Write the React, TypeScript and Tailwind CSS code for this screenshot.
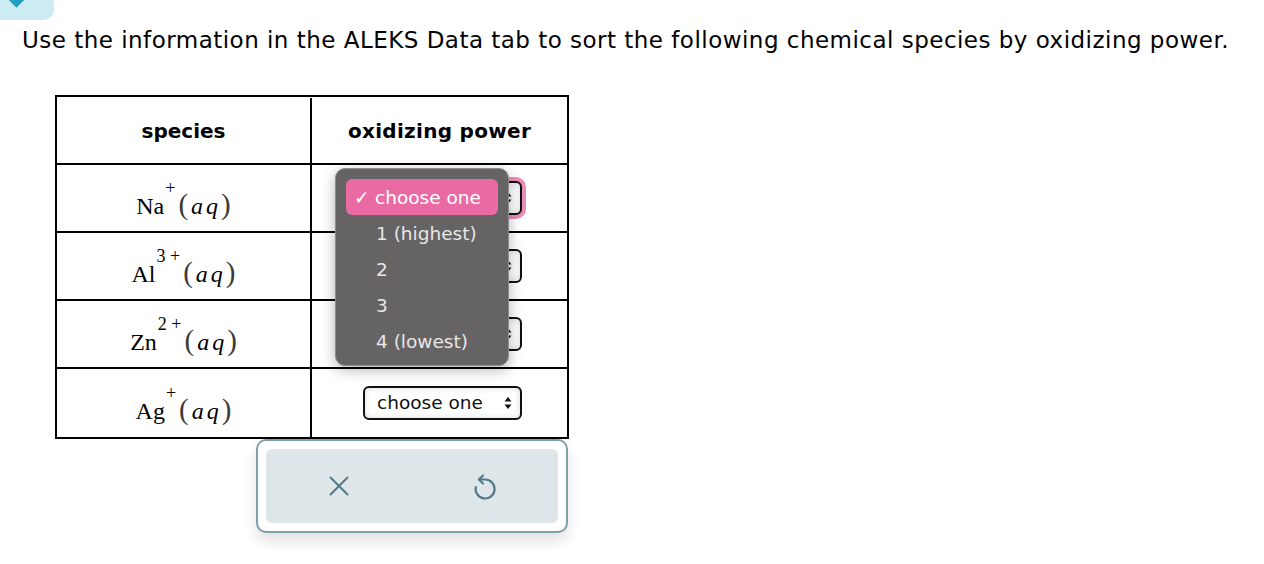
import React from "react";

const species = [
  { base: "Na", charge: "+" },
  { base: "Al", charge: "3 +" },
  { base: "Zn", charge: "2 +" },
  { base: "Ag", charge: "+" },
];

function Species({ base, charge }: { base: string; charge: string }) {
  return (
    <div className="flex items-end font-['Liberation_Serif',serif] text-black">
      <span className="text-[24px] leading-[26px]">{base}</span>
      <span className="text-[18px] leading-[18px] mb-[22px] ml-[1px] whitespace-pre">{charge}</span>
      <span className="flex items-end ml-[3px] text-[#3a3a3a]">
        <span className="text-[29px] leading-[30px] font-light">(</span>
        <span className="italic text-[24px] leading-[26px] mx-[3px] text-black">a</span>
        <span className="italic text-[24px] leading-[26px] mr-[3px] text-black">q</span>
        <span className="text-[29px] leading-[30px] font-light">)</span>
      </span>
    </div>
  );
}

function Arrows() {
  return (
    <svg width="8" height="14" viewBox="0 0 8 14" className="shrink-0">
      <path d="M4 1 L7.5 5.5 H0.5 Z" fill="#111" />
      <path d="M4 13 L7.5 8.5 H0.5 Z" fill="#111" />
    </svg>
  );
}

function Select({ focused }: { focused?: boolean }) {
  return (
    <div
      className={
        "flex items-center justify-between w-[159px] h-[34px] rounded-[6px] border-2 border-[#111] bg-white pl-[12px] pr-[8px] text-[18.5px] text-[#111] shadow-[inset_0_0_6px_rgba(0,0,0,0.15)] " +
        (focused ? "ring-4 ring-[#ec8cb8]" : "")
      }
    >
      <span>choose one</span>
      <Arrows />
    </div>
  );
}

export default function App() {
  return (
    <div className="relative w-[1264px] h-[564px] overflow-hidden bg-white font-['DejaVu_Sans',Verdana,sans-serif] text-black">
      {/* badge */}
      <div className="relative w-[54px] h-[20px] rounded-br-[10px] bg-[#cdebf3] overflow-hidden">
        <div className="absolute left-[10px] -top-[8px] w-[13px] h-[13px] rotate-45 bg-[#1fa0c0]" />
      </div>

      <p className="ml-[22px] mt-[6px] text-[23px] leading-[28px] tracking-[0.48px]">
        Use the information in the ALEKS Data tab to sort the following chemical species by oxidizing power.
      </p>

      <div className="relative ml-[55px] mt-[41px] w-[514px]">
        <div className="border-2 border-black">
          <div className="flex h-[66px] pt-[1px]">
            <div className="w-[255px] border-r-2 border-black flex items-center justify-center font-bold text-[20px]">
              species
            </div>
            <div className="flex-1 flex items-center justify-center font-bold text-[20px] tracking-[0.3px]">
              oxidizing power
            </div>
          </div>
          {species.map((s, i) => (
            <div key={s.base} className={"flex border-t-2 border-black " + (i === 3 ? "h-[70px]" : "h-[68px]")}>
              <div className="w-[255px] border-r-2 border-black flex items-center justify-center pt-[2px]">
                <Species base={s.base} charge={s.charge} />
              </div>
              <div className="flex-1 flex items-center pl-[51px]">
                <Select focused={i === 0} />
              </div>
            </div>
          ))}
        </div>

        {/* open dropdown */}
        <div className="absolute left-[280px] top-[73px] w-[174px] h-[198px] rounded-[10px] border border-[#8f8d8e] bg-[#656364] px-[10px] pt-[10px] shadow-[0_4px_14px_rgba(0,0,0,0.3)] text-[18.5px]">
          <div className="flex items-center h-[36px] rounded-[6px] bg-[#ea6ba4] pl-[8px] pt-[1px] text-white">
            <span className="w-[21px] font-bold">✓</span>
            <span>choose one</span>
          </div>
          {["1 (highest)", "2", "3", "4 (lowest)"].map((t) => (
            <div key={t} className="flex items-center h-[36px] pl-[30px] pt-[2px] text-[#e8e6e7]">
              {t}
            </div>
          ))}
        </div>

        {/* action panel */}
        <div className="ml-[201px] w-[312px] h-[94px] rounded-[10px] border-2 border-[#7f9fa9] bg-white p-[8px] shadow-[0_8px_14px_rgba(0,0,0,0.12)]">
          <div className="flex h-full rounded-[6px] bg-[#dfe6e9]">
            <div className="flex-1 flex items-center justify-center">
              <svg width="22" height="22" viewBox="0 0 22 22">
                <path d="M2.5 2.5 L19.5 19.5 M19.5 2.5 L2.5 19.5" stroke="#4f7a88" strokeWidth="2" strokeLinecap="round" />
              </svg>
            </div>
            <div className="flex-1 flex items-center justify-center">
              <svg width="24" height="30" viewBox="0 0 24 30">
                <path
                  d="M6 8.5 H12 A9.5 9.5 0 1 1 2.8 16"
                  fill="none"
                  stroke="#4f7a88"
                  strokeWidth="2.2"
                  strokeLinecap="round"
                />
                <path d="M10 4.5 L6 8.5 L10 12.5" fill="none" stroke="#4f7a88" strokeWidth="2.2" strokeLinecap="round" strokeLinejoin="round" />
              </svg>
            </div>
          </div>
        </div>
      </div>
    </div>
  );
}
